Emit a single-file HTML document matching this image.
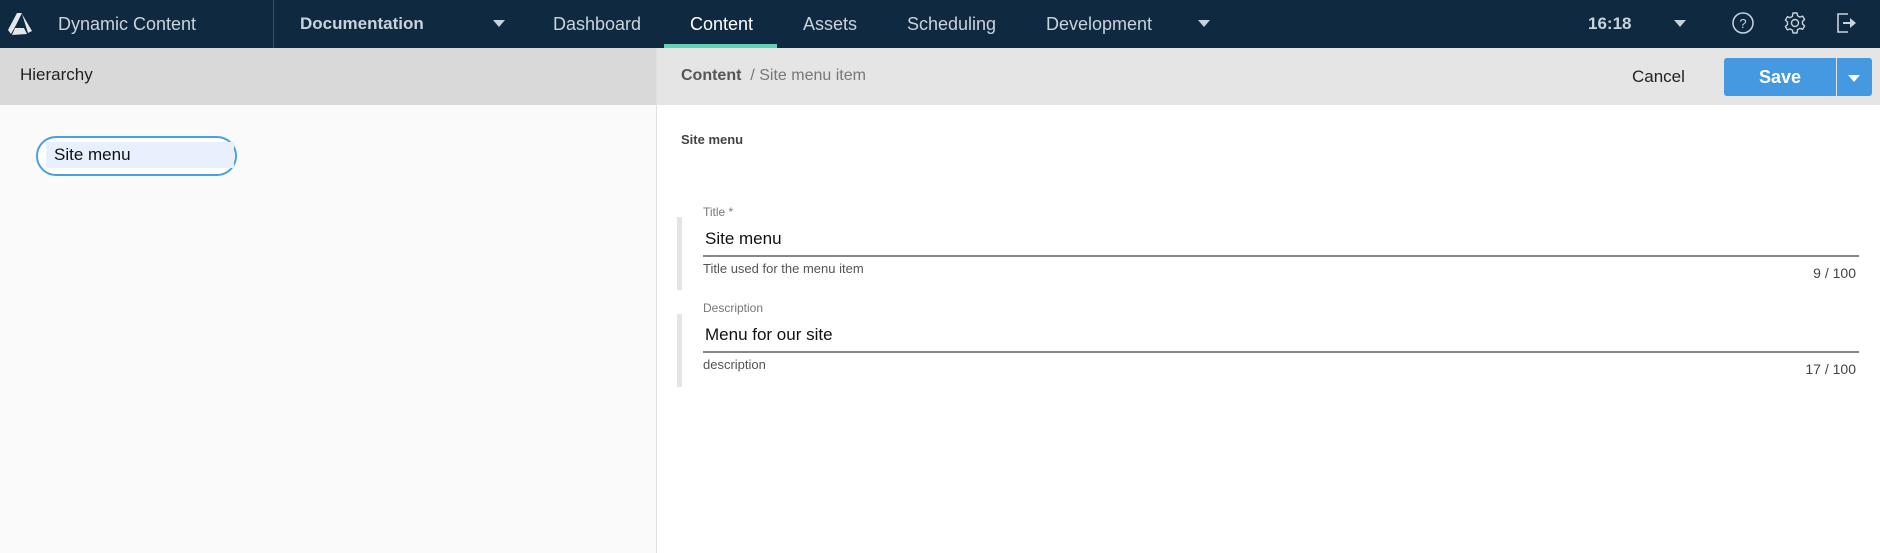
<!DOCTYPE html>
<html><head><meta charset="utf-8"><style>
*{margin:0;padding:0;box-sizing:border-box}
body{width:1880px;height:553px;overflow:hidden;font-family:"Liberation Sans",sans-serif;background:#fff;position:relative}
.a{position:absolute;white-space:nowrap}
.nav{position:absolute;left:0;top:0;width:1880px;height:48px;background:#0f2a40}
.nt{position:absolute;top:14px;font-size:18px;color:#c9d3dc}
.car{position:absolute;width:0;height:0;border-left:6px solid transparent;border-right:6px solid transparent;border-top:7px solid #c9d3dc}
</style></head><body>
<div class="nav">
<svg class="a" style="left:7px;top:12px" width="26" height="24" viewBox="0 0 26 24"><path d="M10 1 L15 1 L9 13 L4 22 L1 18 Z" fill="#e4e8ec"/><path d="M15 2 L25 19 L21 21 Z" fill="#e4e8ec"/><path d="M8 16 L17 16 L20 22 L5 23 Z" fill="#e4e8ec"/></svg>
<div class="nt" style="left:58px">Dynamic Content</div>
<div class="a" style="left:273px;top:0;width:1px;height:48px;background:#3a5166"></div>
<div class="nt" style="left:300px;font-weight:bold;font-size:17px;top:14px">Documentation</div>
<div class="car" style="left:493px;top:20px"></div>
<div class="nt" style="left:553px">Dashboard</div>
<div class="nt" style="left:690px;color:#fff">Content</div>
<div class="a" style="left:664px;top:44px;width:113px;height:4px;background:#5fd3b5"></div>
<div class="nt" style="left:803px">Assets</div>
<div class="nt" style="left:907px">Scheduling</div>
<div class="nt" style="left:1046px">Development</div>
<div class="car" style="left:1198px;top:20px"></div>
<div class="nt" style="left:1588px;font-weight:bold;font-size:17px">16:18</div>
<div class="car" style="left:1674px;top:20px"></div>
<svg class="a" style="left:1731px;top:11px" width="24" height="24" viewBox="0 0 24 24"><circle cx="12" cy="12" r="10" fill="none" stroke="#c9d3dc" stroke-width="1.5"/><text x="12" y="17" font-size="13" text-anchor="middle" fill="#c9d3dc" font-family="Liberation Sans">?</text></svg>
<svg class="a" style="left:1783px;top:11px" width="24" height="24" viewBox="0 0 24 24"><path d="M10 2h4l.6 2.8 2.3 1.3 2.7-1 2 3.4-2.1 1.9v2.6l2.1 1.9-2 3.4-2.7-1-2.3 1.3L14 22h-4l-.6-2.8-2.3-1.3-2.7 1-2-3.4 2.1-1.9v-2.6L2.4 9.1l2-3.4 2.7 1 2.3-1.3z" fill="none" stroke="#c9d3dc" stroke-width="1.4" stroke-linejoin="round"/><circle cx="12" cy="12" r="3.5" fill="none" stroke="#c9d3dc" stroke-width="1.4"/></svg>
<svg class="a" style="left:1834px;top:11px" width="24" height="24" viewBox="0 0 24 24"><path d="M14 3H4v18h10" fill="none" stroke="#c9d3dc" stroke-width="1.6"/><path d="M9 11h7V7l6 5-6 5v-4H9z" fill="#c9d3dc"/></svg>
</div>
<div class="a" style="left:0;top:48px;width:656px;height:57px;background:#d9d9d9"></div>
<div class="a" style="left:20px;top:65px;font-size:17px;color:#222">Hierarchy</div>
<div class="a" style="left:0;top:105px;width:656px;height:448px;background:#fafafa"></div>
<div class="a" style="left:656px;top:48px;width:1px;height:505px;background:#e0e0e0"></div>
<div class="a" style="left:36px;top:136px;width:201px;height:40px;border:2px solid #4a9fe0;border-radius:20px;background:#fff"></div>
<div class="a" style="left:46px;top:142px;width:188px;height:26px;background:#e8f0fd"></div>
<div class="a" style="left:54px;top:145px;font-size:17px;color:#111">Site menu</div>
<div class="a" style="left:657px;top:48px;width:1223px;height:57px;background:#e5e5e5"></div>
<div class="a" style="left:681px;top:67px;font-size:16px;color:#555"><b>Content</b> <span style="color:#777">&nbsp;/ Site menu item</span></div>
<div class="a" style="left:1632px;top:67px;font-size:17px;color:#222">Cancel</div>
<div class="a" style="left:1724px;top:58px;width:112px;height:38px;background:#4599e0;border-radius:3px 0 0 3px;color:#fff;font-weight:bold;font-size:18px;text-align:center;line-height:38px">Save</div>
<div class="a" style="left:1837px;top:58px;width:35px;height:38px;background:#4599e0;border-radius:0 3px 3px 0"></div>
<div class="car" style="left:1848px;top:75px;border-top-color:#fff"></div>
<div class="a" style="left:681px;top:132px;font-size:13px;font-weight:bold;color:#444">Site menu</div>
<div class="a" style="left:677px;top:217px;width:5px;height:73px;background:#e5e5e5"></div>
<div class="a" style="left:703px;top:205px;font-size:12px;color:#777">Title *</div>
<div class="a" style="left:705px;top:229px;font-size:17px;color:#111">Site menu</div>
<div class="a" style="left:703px;top:255px;width:1156px;height:2px;background:#888"></div>
<div class="a" style="left:703px;top:261px;font-size:13px;color:#555">Title used for the menu item</div>
<div class="a" style="left:1806px;top:265px;font-size:14px;color:#444;width:50px;text-align:right">9 / 100</div>
<div class="a" style="left:677px;top:314px;width:5px;height:73px;background:#e5e5e5"></div>
<div class="a" style="left:703px;top:301px;font-size:12px;color:#777">Description</div>
<div class="a" style="left:705px;top:325px;font-size:17px;color:#111">Menu for our site</div>
<div class="a" style="left:703px;top:351px;width:1156px;height:2px;background:#888"></div>
<div class="a" style="left:703px;top:357px;font-size:13px;color:#555">description</div>
<div class="a" style="left:1786px;top:361px;font-size:14px;color:#444;width:70px;text-align:right">17 / 100</div>
</body></html>
